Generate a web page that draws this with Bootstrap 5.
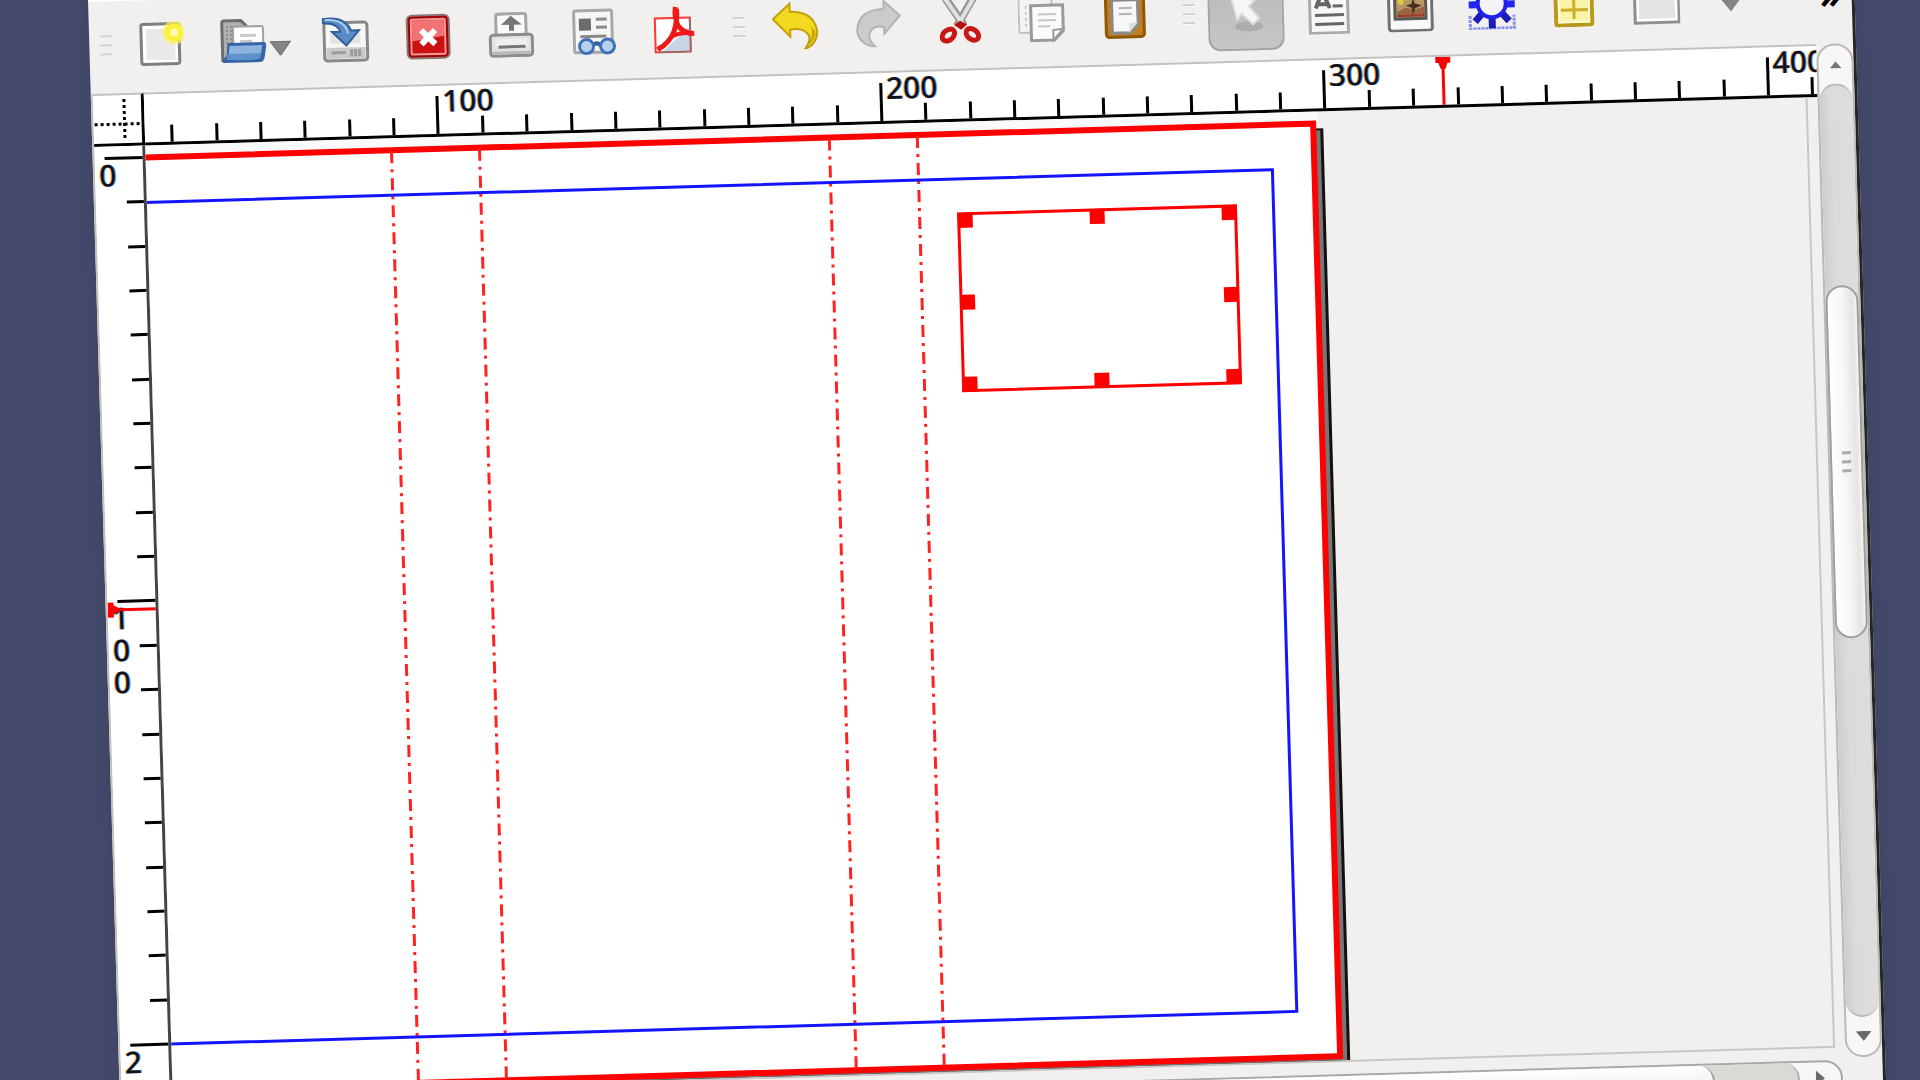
<!DOCTYPE html>
<html lang="en">
<head>
<meta charset="utf-8">
<meta name="viewport" content="width=device-width, initial-scale=1">
<title>Page layout editor</title>
<link rel="stylesheet" href="https://cdn.jsdelivr.net/npm/bootstrap@5.3.0/dist/css/bootstrap.min.css">
<style>
body{background:#434a6a;font-family:"Noto Sans","Open Sans",sans-serif;color:#111}
.desk{height:100vh}
.app-window{width:92vw;height:calc(100vh + 70px);margin-left:88px;background:#f1f0ee;border-right:3px solid #222624;transform:rotate(-1.66deg);transform-origin:0 0;box-shadow:0 0 14px rgba(30,36,66,.2)}
.tools{height:94px;padding-bottom:4px;border-top:2px solid #fff}
.tool{width:82px;height:76px;border:0;border-radius:12px}
.tool svg,.tool-open svg{width:48px;height:48px;display:block}
.tool-open{width:68px;padding-left:16px!important}
.tool-drop{width:36px;border:0}
.tool-pick{width:76px;margin:0 3px;background:linear-gradient(#b9b9b7,#c6c6c4);border:2px solid #a3a3a1}
.grip{width:40px;padding-right:10px;gap:6px}
.grip-first{width:30px;padding-right:7px}
.grip i{display:block;width:12px;height:3px;background:#d2d0ce;border-bottom:1px solid #fff}
.more{font-size:36px;line-height:40px;font-weight:700;width:42px;color:#000}
.work{display:grid;grid-template-columns:51px minmax(0,1fr) 10px 37px;grid-template-rows:53px minmax(0,1fr) 10px;border-left:2px solid #c4c0bc}
.origin,.ruler-x{border-top:2px solid #c4c0bc;border-bottom:3px solid #000;background:#fff}
.origin,.ruler-y{border-right:3px solid #444}
.origin{border-right-color:#000}
.ruler-x{grid-column:2/4}
.ruler-y{background:#fff;grid-row:2/4}
.canvas{border-right:2px solid #c9c6c3;border-bottom:2px solid #c9c6c3}
.work svg.fill{display:block;width:100%;height:100%;overflow:hidden}
.work text{font-size:30px;font-weight:500;fill:#10131c;text-shadow:-1px 0 #e8952caa,1px 0 #2b7be0aa}
.vbar{grid-column:4;grid-row:1/4;border:2px solid #bbb8b5;border-radius:18px;background:#f8f7f6}
.trough-y{background:linear-gradient(90deg,#cfcdcb,#dddbd9 35%,#dfdddb);border-top:2px solid #bcbab7;border-bottom:2px solid #bcbab7;border-radius:17px}
.thumb-y{height:353px;margin-top:200px;background:linear-gradient(90deg,#fff,#f6f6f5 50%,#e6e4e2 85%,#f6f6f6);border:2px solid #a19f9d;border-radius:18px;gap:6px}
.thumb-y i{width:9px;height:3px;background:#aaa}
.arrow-btn{height:38px;border:0}
.hbar{height:36px;margin:2px 40px 4px 2px;border:2px solid #aaa7a4;border-radius:18px;background:#f8f7f6}
.hbar .arrow-btn{height:32px}
.trough-x{background:#dbd9d6;border-right:2px solid #b2afac;border-radius:0 17px 17px 0}
.thumb-x{width:95%;background:linear-gradient(#fff,#f4f3f2 50%,#e6e4e2);border-right:2px solid #a19f9d;border-radius:0 17px 17px 0}
</style>
</head>
<body>
<main class="desk overflow-hidden">
<div class="app-window d-flex flex-column">
  <div class="tools d-flex align-items-center flex-shrink-0" role="toolbar" aria-label="Main tools">
    <div class="grip grip-first d-flex flex-column align-items-end"><i></i><i></i><i></i></div>
    <button class="btn tool p-0 d-flex justify-content-center align-items-center" aria-label="New"><svg viewBox="0 0 48 48"><rect x="5" y="4" width="38" height="40" rx="2" fill="#fff" stroke="#7f7f7d" stroke-width="3"/><rect x="10" y="9" width="29" height="31" fill="#e9e9ea"/><circle cx="38" cy="13" r="12" fill="#faf36b" opacity=".7"/><circle cx="38" cy="13" r="9" fill="#fbf03a"/><circle cx="38" cy="13" r="4" fill="#fffbb5"/></svg></button>
    <button class="btn tool-open p-0" aria-label="Open"><svg viewBox="0 0 48 48"><path d="M4 42V5q0-2 2-2h17l5 5v34z" fill="#b0b0ae" stroke="#6d6d6b" stroke-width="3"/><path d="M9 8v20M13 8v20" stroke="#8d8d8b" stroke-width="2" stroke-dasharray="2 2"/><path d="M15 9h28q2 0 2 2v25H15z" fill="#fff" stroke="#a0a09e" stroke-width="2"/><path d="M22 18h16M22 24h12" stroke="#c9c9c9" stroke-width="3"/><path d="M9 27q0-2 2-2h34q3 0 3 3l-2 12q-1 5-5 5H5q-2 0-1-3l4-4z" fill="#3465a4"/><path d="M11 28h33l-2 11q-1 3-3 3H8q3-6 3-14z" fill="#8db3df"/><path d="M9 36h34l-1 3q-1 3-3 3H8z" fill="#5f92cc"/></svg></button>
    <button class="btn tool-drop p-0 text-start" aria-label="Recent documents"><svg width="22" height="30" viewBox="0 0 22 30"><path d="M1 16h20L11 30z" fill="#858583" stroke="#6e6e6c"/></svg></button>
    <button class="btn tool p-0 d-flex justify-content-center align-items-center" aria-label="Save"><svg viewBox="0 0 48 48"><rect x="2" y="8" width="43" height="38" rx="3" fill="#f7f7f7" stroke="#888886" stroke-width="3"/><path d="M4 33h39v11H4z" fill="#cacac8"/><path d="M9 38h14M29 35v7M33 35v7M37 35v7" stroke="#9b9b99" stroke-width="3"/><path d="M8 17h30v12H8z" fill="#e3e3e3"/><path d="M1 4Q23 1 29 16h8L24 31 10 17h8Q16 8 1 8z" fill="#5a8cc4" stroke="#2f5f9c" stroke-width="2"/><path d="M3 5q20-1 23 14" fill="none" stroke="#a9c8e8" stroke-width="2"/></svg></button>
    <button class="btn tool p-0 d-flex justify-content-center align-items-center" aria-label="Close"><svg viewBox="0 0 48 48"><rect x="3" y="3" width="42" height="43" rx="5" fill="#a40000" stroke="#8a7676" stroke-width="2"/><rect x="7" y="7" width="34" height="35" rx="1" fill="#cc1111" stroke="#f19a9a" stroke-width="2"/><path d="M8 8h32v16L8 29z" fill="#f17373"/><path d="M17 18l14 14M31 18 17 32" stroke="#fff" stroke-width="6"/></svg></button>
    <button class="btn tool p-0 d-flex justify-content-center align-items-center" aria-label="Print"><svg viewBox="0 0 48 48"><rect x="10" y="4" width="30" height="25" rx="2" fill="#fafafa" stroke="#a5a5a3" stroke-width="3"/><path d="M25 6l11 9h-8v6h-5v-6h-8z" fill="#777775"/><rect x="4" y="25" width="42" height="21" rx="3" fill="#e3e3e1" stroke="#8c8c8a" stroke-width="3"/><path d="M9 29h32v8H9z" fill="#efefed"/><path d="M12 37h27" stroke="#777" stroke-width="3"/><path d="M6 43h38" stroke="#b9b9b7" stroke-width="3"/></svg></button>
    <button class="btn tool p-0 d-flex justify-content-center align-items-center" aria-label="Preview"><svg viewBox="0 0 48 48"><rect x="6" y="3" width="38" height="42" rx="2" fill="#f6f6f5" stroke="#a7a7a5" stroke-width="3"/><rect x="11" y="11" width="12" height="12" fill="#6c6c6a"/><path d="M28 12h11M28 20h11M12 29h26" stroke="#8a8a88" stroke-width="3"/><path d="M24 38q4-4 8 0" fill="none" stroke="#2e5f9e" stroke-width="4"/><circle cx="18" cy="39" r="7" fill="#b7d0ec" stroke="#3f73b5" stroke-width="3"/><circle cx="39" cy="39" r="7" fill="#b7d0ec" stroke="#3f73b5" stroke-width="3"/></svg></button>
    <button class="btn tool p-0 d-flex justify-content-center align-items-center" aria-label="Export as PDF"><svg viewBox="0 0 48 48"><rect x="5" y="13" width="35" height="34" fill="#fff" stroke="#f33" stroke-width="2"/><path d="M40 22v24H12z" fill="#c9d6e6"/><path d="M40 13v34H8" fill="none" stroke="#9b6b6b" stroke-width="2"/><path d="M26 2q-2 8 2 19 6 8 16 8M27 4q1 10-3 22Q19 38 7 44" fill="none" stroke="#f01818" stroke-width="5"/><path d="M20 32q10-5 23-3" fill="none" stroke="#f01818" stroke-width="4"/></svg></button>
    <div class="grip d-flex flex-column align-items-end"><i></i><i></i><i></i></div>
    <button class="btn tool p-0 d-flex justify-content-center align-items-center" aria-label="Undo"><svg viewBox="0 0 48 48"><path d="M1 17 18 2v8q24 0 27 20 0 13-13 18 9-11 2-17-5-5-16-3v7z" fill="#f2da20" stroke="#c2a10a" stroke-width="2"/><path d="M39 25q3 10-5 20 10-6 9-15z" fill="#c9a90c"/></svg></button>
    <button class="btn tool p-0 d-flex justify-content-center align-items-center" aria-label="Redo"><svg viewBox="0 0 48 48"><path d="M46 17 30 2v8Q5 10 3 30q0 14 18 18-10-11-4-17 4-5 13-3v7z" fill="#cbcbca" stroke="#b3b3b1" stroke-width="2"/></svg></button>
    <button class="btn tool p-0 d-flex justify-content-center align-items-center" aria-label="Cut"><svg viewBox="0 0 48 48"><path d="M10 1 28 29M38 1 21 29" stroke="#999997" stroke-width="8"/><path d="M10 2 27 28M38 2 22 28" stroke="#e2e2e1" stroke-width="4"/><path d="M18 28l6-4 7 4-6 5z" fill="#b80d0d"/><ellipse cx="12" cy="38" rx="7" ry="5" transform="rotate(-40 12 38)" fill="#f1f0ee" stroke="#c91616" stroke-width="5"/><ellipse cx="36" cy="38" rx="7" ry="5" transform="rotate(40 36 38)" fill="#f1f0ee" stroke="#c91616" stroke-width="5"/></svg></button>
    <button class="btn tool p-0 d-flex justify-content-center align-items-center" aria-label="Copy"><svg viewBox="0 0 48 48"><rect x="1" y="2" width="33" height="36" rx="2" fill="#f4f4f3" stroke="#c1c1bf" stroke-width="2"/><path d="M8 11v22" stroke="#ccc" stroke-width="2" stroke-dasharray="3 3"/><path d="M13 11h32v26l-9 9H13z" fill="#fafafa" stroke="#9a9a98" stroke-width="3"/><path d="M45 35l-10 1v10z" fill="#fff" stroke="#9a9a98" stroke-width="2"/><path d="M20 20h18M20 26h18M20 32h12" stroke="#c6c6c4" stroke-width="2"/></svg></button>
    <button class="btn tool p-0 d-flex justify-content-center align-items-center" aria-label="Paste"><svg viewBox="0 0 48 48"><rect x="6" y="2" width="38" height="43" rx="3" fill="#c17d21" stroke="#8f5902" stroke-width="3"/><path d="M12 8h26v25l-8 8H12z" fill="#f7f7f7" stroke="#8a8a88" stroke-width="3"/><rect x="17" y="1" width="17" height="8" fill="#888"/><path d="M19 16h13M19 22h13" stroke="#b4b4b2" stroke-width="2"/><path d="M38 30l-9 2v9z" fill="#ddd"/></svg></button>
    <div class="grip d-flex flex-column align-items-end"><i></i><i></i><i></i></div>
    <button class="btn tool tool-pick p-0 d-flex justify-content-center align-items-center" aria-label="Select item" aria-pressed="true"><svg viewBox="0 0 48 48"><ellipse cx="27" cy="38" rx="14" ry="5" fill="#acacaa"/><path d="M9 6l24 6-6 6 10 12-6 6-11-11-5 6z" fill="#f6f6f5" stroke="#dededc" stroke-width="2"/></svg></button>
    <button class="btn tool p-0 d-flex justify-content-center align-items-center" aria-label="Insert text frame"><svg viewBox="0 0 48 48"><rect x="6" y="1" width="38" height="46" fill="#f8f8f8" stroke="#aaaaa8" stroke-width="3"/><path d="M12 22l5-12h4l5 12M14 18h10" fill="none" stroke="#666" stroke-width="4"/><path d="M29 20h10M11 29h29M11 38h29" stroke="#666664" stroke-width="3"/></svg></button>
    <button class="btn tool p-0 d-flex justify-content-center align-items-center" aria-label="Insert image frame"><svg viewBox="0 0 48 48"><rect x="3" y="2" width="43" height="45" rx="3" fill="#f8f8f8" stroke="#70706e" stroke-width="3"/><rect x="9" y="8" width="31" height="27" fill="#b79768" stroke="#5b5956" stroke-width="3"/><path d="M11 28l9-4 9 2 10-3v10H11z" fill="#9a6544"/><path d="M12 32h26" stroke="#a52a1c" stroke-width="2" stroke-dasharray="3 1"/><path d="M27 14l2 6 7 2-7 3-2 7-1-8-6-2 6-2z" fill="#44301e"/><circle cx="15" cy="18" r="3" fill="#e3c73d"/></svg></button>
    <button class="btn tool p-0 d-flex justify-content-center align-items-center" aria-label="Insert render frame"><svg viewBox="0 0 48 48"><path d="M2 34v13h44V34" fill="none" stroke="#8590ee" stroke-width="3" stroke-dasharray="3 1"/><g stroke="#1c1cb8" stroke-width="7"><path d="M24 37v10M14 32l-7 8M34 32l7 8"/><path d="M10 23H1M38 23h9M14 13 7 6M34 13l7-7" stroke="#2525f5"/></g><circle cx="24" cy="22" r="14" fill="#f4f4f6" stroke="#2222f0" stroke-width="4"/></svg></button>
    <button class="btn tool p-0 d-flex justify-content-center align-items-center" aria-label="Insert table"><svg viewBox="0 0 48 48"><rect x="6" y="4" width="36" height="42" rx="2" fill="#fbf3a5" stroke="#b9991a" stroke-width="4"/><rect x="9" y="7" width="30" height="36" fill="none" stroke="#fffbd8" stroke-width="2"/><path d="M24 11v29M11 31h27" stroke="#cbb02d" stroke-width="3"/></svg></button>
    <button class="btn tool p-0 d-flex justify-content-center align-items-center" aria-label="Insert shape"><svg viewBox="0 0 48 48"><rect x="3" y="3" width="44" height="43" fill="#fff" stroke="#8f8f8d" stroke-width="3"/><rect x="7" y="7" width="36" height="35" fill="#e4e4e4"/></svg></button>
    <button class="btn tool-drop p-0 ms-3" aria-label="Choose shape"><svg width="22" height="30" viewBox="0 0 22 30"><path d="M0 14h22L11 28z" fill="#858583"/></svg></button>
    <button class="btn more p-0 ms-auto" aria-label="More tools"><em>»</em></button>
  </div>

  <div class="work flex-grow-1">
    <div class="origin"><svg class="fill" aria-hidden="true"><path d="M1 29h47M31 4v40" stroke="#000" stroke-width="3" stroke-dasharray="3 3"/></svg></div>
    <div class="ruler-x"><svg class="fill" id="rulerX" role="img" aria-label="Horizontal ruler"></svg></div>
    <div class="ruler-y"><svg class="fill" id="rulerY" role="img" aria-label="Vertical ruler"></svg></div>
    <div class="canvas"><svg class="fill" role="img" aria-label="Document page with column guides">
      <rect x="0" y="0" width="1172" height="10" fill="#f8fafa"/>
      <path d="M0 17h1178v935H0z" fill="#111"/>
      <path d="M0 19h1175v931H0z" fill="#777"/>
      <rect x="-60" y="12" width="1228" height="933" fill="#fff" stroke="#f00" stroke-width="6"/>
      <g stroke="#f22" stroke-width="3" stroke-dasharray="12 6 3 6"><path d="M246 13v930M334 13v930M684 13v930M772 13v930"/></g>
      <rect x="-60" y="57" width="1186" height="842" fill="none" stroke="#1414ff" stroke-width="3"/>
      <rect x="811" y="92" width="277" height="177" fill="none" stroke="#f00" stroke-width="3"/>
      <path d="M810 91h15v15h-15zM942 91h15v15h-15zM1074 91h15v15h-15zM811 173h14v15h-14zM1074 173h14v15h-14zM810 255h15v15h-15zM942 255h15v15h-15zM1074 255h15v15h-15z" fill="#f00"/>
    </svg></div>
    <div class="vbar d-flex flex-column">
      <button class="btn arrow-btn p-0 d-flex justify-content-center align-items-center" aria-label="Scroll up"><svg width="12" height="8"><path d="M0 8 6 1l6 7z" fill="#777"/></svg></button>
      <div class="trough-y flex-grow-1"><div class="thumb-y d-flex flex-column justify-content-center align-items-center"><i></i><i></i><i></i></div></div>
      <button class="btn arrow-btn p-0 d-flex justify-content-center align-items-center" aria-label="Scroll down"><svg width="16" height="10"><path d="M0 0h16L8 10z" fill="#6a6a68"/></svg></button>
    </div>
  </div>
  <div class="hbar d-flex flex-shrink-0">
    <div class="trough-x flex-grow-1 d-flex"><div class="thumb-x"></div></div>
    <button class="btn arrow-btn p-0 px-3 d-flex align-items-center border-0" aria-label="Scroll right"><svg width="9" height="16"><path d="M0 0v16l9-8z" fill="#6a6a68"/></svg></button>
  </div>
</div>
</main>
<script src="https://cdn.jsdelivr.net/npm/bootstrap@5.3.0/dist/js/bootstrap.bundle.min.js"></script>
<script>
// Rulers: a tick every 10 units, a numbered one every 100.
const SCALE = 4.435;
const line = (a, b, c, d) => `<path d="M${a} ${b}L${c} ${d}" stroke="#000" stroke-width="3"/>`;
let rx = '', ry = '';
for (let n = 40; n <= 480; n += 10) {
  const x = Math.round(n * SCALE - 150), big = n % 100 === 0;
  rx += line(x, big ? 10 : 31, x, 50);
  if (big) rx += `<text x="${x + 5}" y="26">${n}</text>`;
}
for (let n = 0; n <= 240; n += 10) {
  const y = Math.round(n * SCALE + 12), big = n % 100 === 0;
  ry += line(big ? 10 : 31, y, 50, y);
  if (big) [...String(n)].slice(0, n === 200 ? 1 : 3).forEach((d, i) => ry += `<text x="4" y="${y + 28 + i * 32}">${d}</text>`);
}
const red = 'fill="#f00"';
rx += `<path d="M1292 0h15v6h-3l-2 6h-1v38h-3V12h-1l-2-6h-3z" ${red}/>`;
ry += `<path d="M0 456v15h6v-3l6-3h38v-3H12l-6-3v-3z" ${red}/>`;
document.getElementById('rulerX').innerHTML = rx;
document.getElementById('rulerY').innerHTML = ry;
</script>
</body>
</html>
